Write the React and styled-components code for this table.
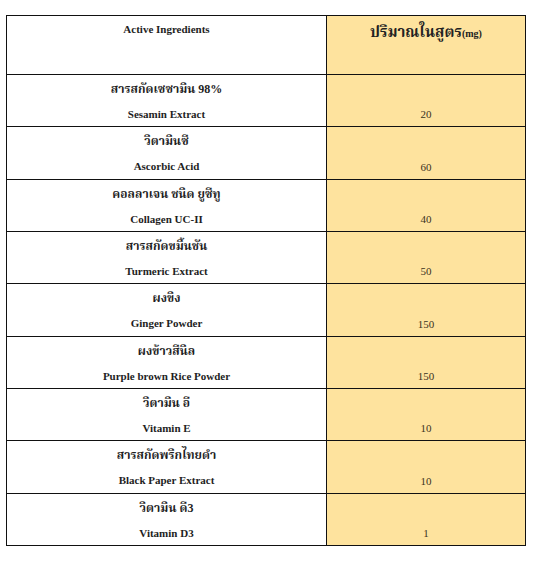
import React from 'react';
import styled, { createGlobalStyle } from 'styled-components';

const GlobalStyle = createGlobalStyle`
    html, body {
        margin: 0;
        padding: 0;
        background: #fff;
    }
`;

const rows = [
    { th: 'สารสกัดเซซามิน 98%', en: 'Sesamin Extract', mg: '20' },
    { th: 'วิตามินซี', en: 'Ascorbic Acid', mg: '60' },
    { th: 'คอลลาเจน ชนิด ยูซีทู', en: 'Collagen UC-II', mg: '40' },
    { th: 'สารสกัดขมิ้นชัน', en: 'Turmeric Extract', mg: '50' },
    { th: 'ผงขิง', en: 'Ginger Powder', mg: '150' },
    { th: 'ผงข้าวสีนิล', en: 'Purple brown Rice Powder', mg: '150' },
    { th: 'วิตามิน อี', en: 'Vitamin E', mg: '10' },
    { th: 'สารสกัดพริกไทยดำ', en: 'Black Paper Extract', mg: '10' },
    { th: 'วิตามิน ดี3', en: 'Vitamin D3', mg: '1' },
];

export default function App() {
    return (
        <Page>
            <GlobalStyle />
            <Table>
                <Row $height={58}>
                    <NameCell>
                        <HeadEn>Active Ingredients</HeadEn>
                    </NameCell>
                    <AmountCell $top>
                        <HeadTh>ปริมาณในสูตร<Small>(mg)</Small></HeadTh>
                    </AmountCell>
                </Row>
                {rows.map((r, idx) => (
                    <Row key={idx} $height={52.33} $line>
                        <NameCell>
                            <ThaiName>{r.th}</ThaiName>
                            <EnName>{r.en}</EnName>
                        </NameCell>
                        <AmountCell>
                            <Amount>{r.mg}</Amount>
                        </AmountCell>
                    </Row>
                ))}
            </Table>
        </Page>
    );
}

const Page = styled.div`
    padding: 15px 0 0 6px;
    width: 538px;
    height: 583px;
    box-sizing: border-box;
`;

const Table = styled.div`
    width: 520px;
    border: 1px solid #111;
    box-sizing: border-box;
`;

const Row = styled.div`
    display: grid;
    grid-template-columns: 320px 1fr;
    height: ${p => p.$height}px;
    border-top: ${p => (p.$line ? '1px solid #111' : 'none')};
    box-sizing: border-box;
`;

const NameCell = styled.div`
    display: flex;
    flex-direction: column;
    align-items: center;
    border-right: 1px solid #111;
    font-family: "Liberation Serif", "Noto Serif Thai", "Noto Sans Thai", serif;
    color: #1e1e1e;
`;

const AmountCell = styled.div`
    background: #fee39e;
    display: flex;
    justify-content: center;
    align-items: ${p => (p.$top ? 'flex-start' : 'flex-end')};
    font-family: "Liberation Serif", "Noto Serif Thai", "Noto Sans Thai", serif;
`;

const HeadEn = styled.div`
    font-size: 11px;
    font-weight: bold;
    margin-top: 7px;
`;

const HeadTh = styled.div`
    font-size: 15px;
    font-weight: bold;
    color: #222;
    margin-top: 5px;
`;

const Small = styled.span`
    font-size: 10px;
`;

const ThaiName = styled.div`
    font-size: 12px;
    font-weight: bold;
    margin-top: 5px;
    line-height: 18px;
`;

const EnName = styled.div`
    font-size: 11px;
    font-weight: bold;
    margin-top: 9px;
    line-height: 14px;
`;

const Amount = styled.div`
    font-size: 11px;
    color: #3b3221;
    margin-bottom: 5px;
    line-height: 14px;
`;
